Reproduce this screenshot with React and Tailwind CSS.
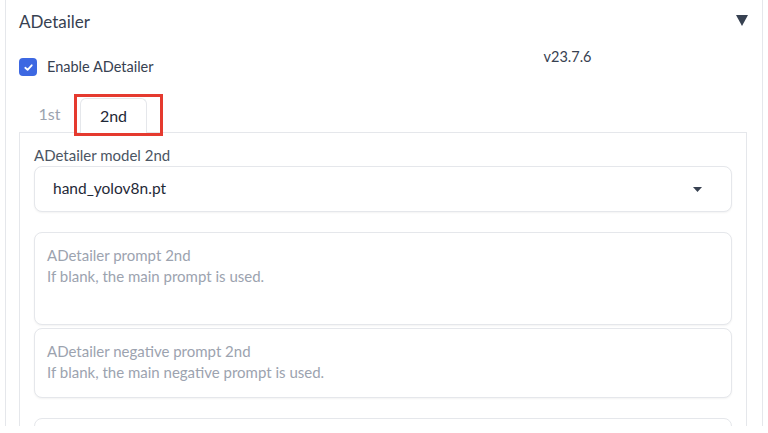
// ─── ADetailer panel ─────────────────────────────────────────────────────────
// Gradio-style accordion with tabs, dropdown and prompt boxes

const FONT = "font-['Lato','Noto_Sans',sans-serif]"

function Checkbox() {
  return (
    <span className="flex h-[18px] w-[18px] items-center justify-center rounded-[4px] bg-[#3d68e2]">
      <svg width="11" height="11" viewBox="0 0 12 12" fill="none">
        <path d="M2.5 6.3 L5 8.6 L9.5 3.6" stroke="white" strokeWidth="2" strokeLinecap="round" strokeLinejoin="round" />
      </svg>
    </span>
  )
}

function PromptBox({ title, hint, height, className = '' }) {
  return (
    <div
      className={`rounded-lg border border-[#e5e7eb] bg-white px-3 pt-[12px] shadow-[0_1px_2px_rgba(0,0,0,0.05)] ${height} ${className}`}
    >
      <p className="text-[15px] leading-[21px] text-[#9ca3af]">{title}</p>
      <p className="text-[15px] leading-[21px] text-[#9ca3af]">{hint}</p>
    </div>
  )
}

export default function App() {
  return (
    <div className={`h-[433px] w-[768px] overflow-hidden bg-white ${FONT}`}>
      <div className="mx-[5px] h-[426px] overflow-hidden border-x border-[#e5e7eb]">

        {/* ── Accordion header ── */}
        <div className="flex items-start justify-between pl-[13px] pr-[14px] pt-[10px]">
          <span className="text-[17px] leading-6 text-[#374151]">ADetailer</span>
          <svg width="12" height="11" viewBox="0 0 12 11" className="mt-[5px]">
            <path d="M0 0 H12 L6 11 Z" fill="#374151" />
          </svg>
        </div>

        {/* ── Enable + version ── */}
        <div className="mt-[13px] grid grid-cols-2 pl-[13px]">
          <label className="flex items-center gap-[10px] pt-[10px]">
            <Checkbox />
            <span className="text-[14.5px] leading-5 text-[#374151]">Enable ADetailer</span>
          </label>
          <div className="pl-[153px] text-[14.5px] leading-5 text-[#374151]">v23.7.6</div>
        </div>

        {/* ── Tabs ── */}
        <div className="ml-[13px] mr-[15px] mt-[21px]">
          <div className="flex items-end">
            <button className="h-[34px] w-[61px] pb-[2px] text-[16px] text-[#9ca3af]">1st</button>
            <div className="relative">
              <button className="relative z-10 -mb-px h-[35px] w-[67px] rounded-t-md border-x border-t border-[#e5e7eb] bg-white text-[16px] text-[#1f2937]">
                2nd
              </button>
              <span className="pointer-events-none absolute -left-[6px] -top-[4px] z-20 h-[42px] w-[89px] border-[3px] border-[#e53a2f]" />
            </div>
          </div>

          {/* ── Tab panel ── */}
          <div className="h-[300px] border-x border-t border-[#e5e7eb] px-[14px] pt-[12px]">
            <p className="text-[15px] leading-5 text-[#4b5563]">ADetailer model 2nd</p>
            <div className="mt-[1px] flex h-[46px] items-center justify-between rounded-lg border border-[#e5e7eb] bg-white pl-[18px] pr-[29px] shadow-[0_1px_2px_rgba(0,0,0,0.05)]">
              <span className="text-[15.5px] text-[#1f2937]">hand_yolov8n.pt</span>
              <svg width="9" height="5" viewBox="0 0 9 5">
                <path d="M0 0 H9 L4.5 5 Z" fill="#374151" />
              </svg>
            </div>

            <PromptBox
              title="ADetailer prompt 2nd"
              hint="If blank, the main prompt is used."
              height="h-[93px]"
              className="mt-[20px]"
            />
            <PromptBox
              title="ADetailer negative prompt 2nd"
              hint="If blank, the main negative prompt is used."
              height="h-[70px]"
              className="mt-[3px]"
            />
            <div className="mt-[20px] h-[80px] rounded-lg border border-[#e5e7eb] bg-white" />
          </div>
        </div>

      </div>
    </div>
  )
}
